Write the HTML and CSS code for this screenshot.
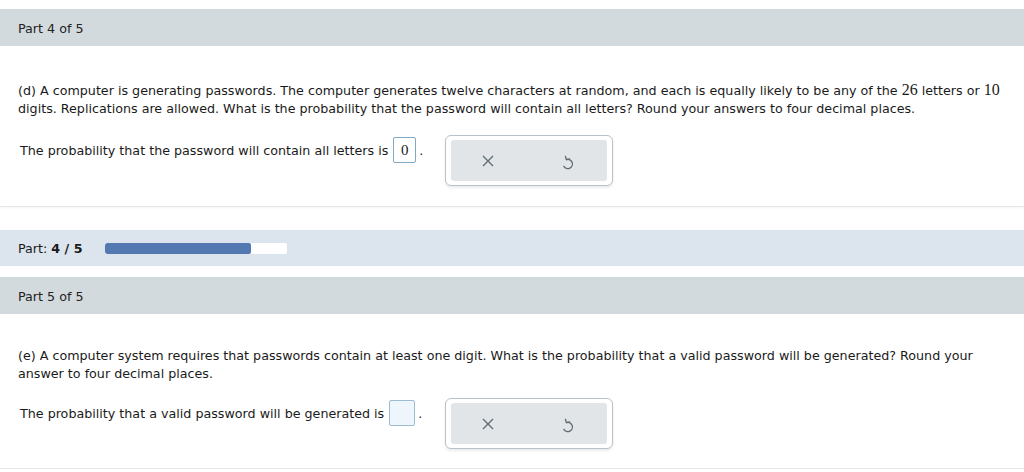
FILE: index.html
```html
<!DOCTYPE html>
<html>
<head>
<meta charset="utf-8">
<link rel="stylesheet" href="styles.css">
</head>
<body>
<div class="page">
  <div class="part-header first">Part 4 of 5</div>
  <div class="part-body part-d">
    <p class="question">(d) A computer is generating passwords. The computer generates twelve characters at random, and each is equally likely to be any of the <span class="num">26</span> letters or <span class="num">10</span> digits. Replications are allowed. What is the probability that the password will contain all letters? Round your answers to four decimal places.</p>
    <div class="answer-row">
      <div class="answer-text">The probability that the password will contain all letters is <span class="input filled">0</span><span class="dot">.</span></div>
      <div class="tools">
        <div class="tools-inner">
          <svg class="icon-x" width="12" height="12" viewBox="0 0 12 12"><path d="M1 1L11 11M11 1L1 11" stroke="#5f6b73" stroke-width="1.3" fill="none"/></svg>
          <svg class="icon-undo" width="12" height="15" viewBox="0 0 12 15"><path d="M4.4 4.6A4.6 4.6 0 1 1 1.9 11.4" stroke="#5f6b73" stroke-width="1.3" fill="none" stroke-linecap="round"/><path d="M3.4 1.3L4.4 4.6L7.6 3.9" stroke="#5f6b73" stroke-width="1.3" fill="none" stroke-linejoin="round" stroke-linecap="round"/></svg>
        </div>
      </div>
    </div>
  </div>
  <div class="divider"></div>
  <div class="progress-band">
    <span class="progress-label">Part: <b>4 / 5</b></span>
    <div class="progress-track"><div class="progress-fill" style="width:80%"></div></div>
  </div>
  <div class="part-header">Part 5 of 5</div>
  <div class="part-body part-e">
    <p class="question">(e) A computer system requires that passwords contain at least one digit. What is the probability that a valid password will be generated? Round your answer to four decimal places.</p>
    <div class="answer-row">
      <div class="answer-text">The probability that a valid password will be generated is <span class="input empty"></span><span class="dot">.</span></div>
      <div class="tools">
        <div class="tools-inner">
          <svg class="icon-x" width="12" height="12" viewBox="0 0 12 12"><path d="M1 1L11 11M11 1L1 11" stroke="#5f6b73" stroke-width="1.3" fill="none"/></svg>
          <svg class="icon-undo" width="12" height="15" viewBox="0 0 12 15"><path d="M4.4 4.6A4.6 4.6 0 1 1 1.9 11.4" stroke="#5f6b73" stroke-width="1.3" fill="none" stroke-linecap="round"/><path d="M3.4 1.3L4.4 4.6L7.6 3.9" stroke="#5f6b73" stroke-width="1.3" fill="none" stroke-linejoin="round" stroke-linecap="round"/></svg>
        </div>
      </div>
    </div>
  </div>
  <div class="divider last"></div>
</div>
</body>
</html>
```
FILE: styles.css
```css
html, body {
  margin: 0;
  padding: 0;
  background: #ffffff;
}
body {
  font-family: "DejaVu Sans", Verdana, sans-serif;
  font-size: 12.7px;
  color: #1a1a1a;
}
.page {
  width: 1024px;
  overflow: hidden;
}
.part-header {
  box-sizing: border-box;
  height: 37px;
  background: #d3dadd;
  display: flex;
  align-items: center;
  padding: 2px 0 0 18px;
  color: #222;
}
.part-header.first {
  margin-top: 9px;
}
.part-body {
  padding: 0 18px;
}
.part-d {
  padding-right: 10px;
}
.question {
  margin: 36px 0 0 0;
  line-height: 18px;
}
.part-e .question {
  margin-top: 33px;
}
.num {
  font-family: "Liberation Serif", "Times New Roman", serif;
  font-size: 16px;
  line-height: 1;
}
.answer-row {
  display: flex;
  align-items: flex-start;
  margin-top: 17px;
}
.part-e .answer-row {
  margin-top: 15px;
}
.answer-text {
  display: flex;
  align-items: center;
  height: 26px;
  padding-left: 2px;
  margin-top: 2px;
}
.input {
  display: inline-block;
  box-sizing: border-box;
  height: 26px;
  margin-left: 5px;
  border: 1px solid #7fa9c4;
  border-radius: 2px;
  text-align: center;
  line-height: 24px;
  font-family: "Liberation Serif", "Times New Roman", serif;
  font-size: 15px;
}
.input.filled {
  width: 23px;
}
.input.empty {
  width: 26px;
  background: #eef5fb;
  border-color: #9cbcd2;
}
.dot {
  margin-left: 3px;
}
.tools {
  box-sizing: border-box;
  width: 168px;
  height: 51px;
  border: 1px solid #b8c2c8;
  border-radius: 6px;
  background: #fff;
  padding: 4px 5px;
  margin-left: 22px;
  box-shadow: 0 2px 3px rgba(0,0,0,0.08);
}
.part-e .tools {
  margin-left: 23px;
}
.tools-inner {
  height: 100%;
  background: #e1e5e8;
  border-radius: 3px;
  display: flex;
  align-items: center;
  justify-content: space-between;
  padding: 0 33px 0 31px;
}
.icon-undo {
  margin-top: 3px;
}
.divider {
  height: 1px;
  background: #e3e7e9;
  margin-top: 20px;
  box-shadow: 0 1px 2px rgba(0,0,0,0.06);
}
.divider.last {
  margin-top: 19px;
}
.progress-band {
  margin-top: 23px;
  height: 36px;
  background: #dce5ee;
  display: flex;
  align-items: center;
  padding-left: 18px;
  margin-bottom: 11px;
}
.progress-label {
  width: 87px;
}
.progress-label b {
  font-weight: bold;
}
.progress-track {
  width: 182px;
  height: 11px;
  background: #fff;
  border-radius: 2px;
  overflow: hidden;
}
.progress-fill {
  height: 100%;
  background: #5479b0;
  border-radius: 2px;
}
```
